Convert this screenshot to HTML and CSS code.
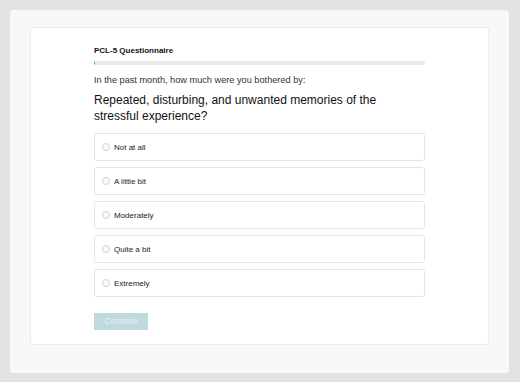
FILE: index.html
```html
<!DOCTYPE html>
<html lang="en">
<head>
  <meta charset="UTF-8">
  <meta name="viewport" content="width=device-width, initial-scale=1">
  <title>PCL-5 Questionnaire</title>
  <link rel="stylesheet" href="styles.css">
</head>
<body>

<div class="page-panel">
  <div class="quiz-card">
    <div class="quiz-title">PCL-5 Questionnaire</div>
    <div class="progress"><div class="progress-fill" style="width: 0.4%"></div></div>

    <div class="quiz-prompt">In the past month, how much were you bothered by:</div>
    <div class="quiz-question">Repeated, disturbing, and unwanted memories of the stressful experience?</div>

    <div class="quiz-options">
      <label class="quiz-option"><span class="radio"></span>Not at all</label>
      <label class="quiz-option"><span class="radio"></span>A little bit</label>
      <label class="quiz-option"><span class="radio"></span>Moderately</label>
      <label class="quiz-option"><span class="radio"></span>Quite a bit</label>
      <label class="quiz-option"><span class="radio"></span>Extremely</label>
    </div>

    <button class="quiz-button" disabled>Continue</button>
  </div>
</div>

</body>
</html>
```

FILE: styles.css
```css
body {
  font-family: "Liberation Sans", Arial, sans-serif;
  background: #e3e3e3;
  margin: 0;
  padding: 10px 11px 9px 10px;
  color: #222;
}

.page-panel {
  background: #f8f8f8;
  border-radius: 3px;
  padding: 17px 20px 27px 20px;
  height: 363px;
  box-sizing: border-box;
}

.quiz-card {
  background: #fff;
  border: 1px solid #ececec;
  border-radius: 3px;
  height: 318px;
  box-sizing: border-box;
  padding: 17px 63px 0 63px;
}

.quiz-title {
  font-size: 8px;
  font-weight: bold;
  line-height: 11px;
  color: #111;
}

.progress {
  margin-top: 5px;
  height: 4px;
  background: #ebebeb;
  border-radius: 2px;
  overflow: hidden;
}

.progress-fill {
  height: 100%;
  min-width: 1px;
  background: #2fa84f;
}

.quiz-prompt {
  margin-top: 10px;
  font-size: 9.2px;
  line-height: 11px;
  color: #333;
}

.quiz-question {
  margin-top: 6px;
  max-width: 315px;
  font-size: 12px;
  line-height: 16px;
  color: #111;
}

.quiz-options {
  margin-top: 9px;
  display: flex;
  flex-direction: column;
  gap: 6px;
}

.quiz-option {
  display: flex;
  align-items: center;
  height: 28px;
  box-sizing: border-box;
  border: 1px solid #e4e4e4;
  border-radius: 3px;
  padding-left: 7px;
  font-size: 8px;
  color: #222;
}

.radio {
  width: 6px;
  height: 6px;
  border: 1px solid #d4d4d4;
  border-radius: 50%;
  margin-right: 4px;
  background: #fafafa;
}

.quiz-button {
  margin-top: 16px;
  width: 54px;
  height: 17px;
  border: none;
  border-radius: 0;
  background: #bfd9e1;
  color: #e4eff3;
  font-family: inherit;
  font-size: 8.2px;
  padding: 0;
}
```
